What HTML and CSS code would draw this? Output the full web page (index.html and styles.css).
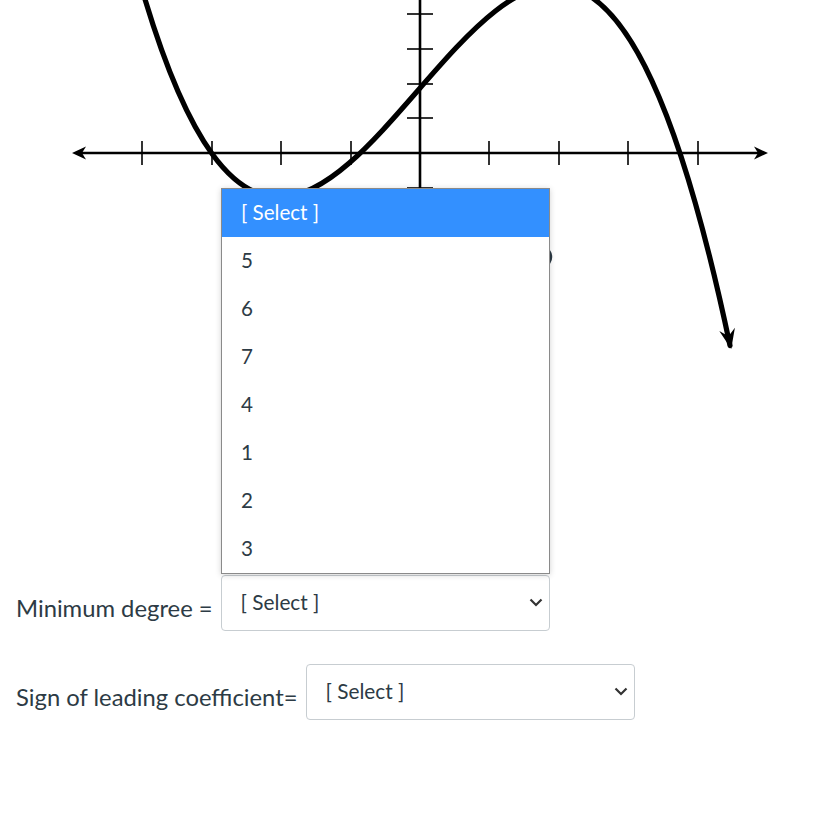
FILE: index.html
```html
<!DOCTYPE html>
<html>
<head>
<meta charset="utf-8">
<title>Graph question</title>
<link rel="stylesheet" href="styles.css">
</head>
<body>
<div class="page">
  <div class="graph">
    <svg class="graph-svg" width="820" height="560" viewBox="0 0 820 560" xmlns="http://www.w3.org/2000/svg">
      <g stroke="#000" fill="none">
        <line x1="78" y1="153" x2="762" y2="153" stroke-width="2.6"/>
        <line x1="420" y1="-2" x2="420" y2="420" stroke-width="2.6"/>
        <g stroke-width="1.6">
          <line x1="142" y1="141" x2="142" y2="165"/>
          <line x1="212" y1="141" x2="212" y2="165"/>
          <line x1="281" y1="141" x2="281" y2="165"/>
          <line x1="351" y1="141" x2="351" y2="165"/>
          <line x1="489" y1="141" x2="489" y2="165"/>
          <line x1="559" y1="141" x2="559" y2="165"/>
          <line x1="628" y1="141" x2="628" y2="165"/>
          <line x1="698" y1="141" x2="698" y2="165"/>
          <line x1="407" y1="14" x2="433" y2="14"/>
          <line x1="407" y1="49" x2="433" y2="49"/>
          <line x1="407" y1="84" x2="433" y2="84"/>
          <line x1="407" y1="118" x2="433" y2="118"/>
          <line x1="407" y1="188" x2="433" y2="188"/>
          <line x1="407" y1="222" x2="433" y2="222"/>
        </g>
        <path d="M144.1,-3.7 C339.4,648.8 534.7,-579.8 730,345.5" stroke-width="5.2" stroke-linecap="round"/>
        <ellipse cx="545" cy="257" rx="6" ry="8" stroke="#2d3b45" stroke-width="2.5"/>
      </g>
      <g fill="#000">
        <path d="M72,153 L86,146.5 L82,153 L86,159.5 Z"/>
        <path d="M768,153 L754,146.5 L758,153 L754,159.5 Z"/>
        <path d="M731.2,349 L734.9,327.8 L728.5,336.3 L719.3,331 Z"/>
      </g>
    </svg>
  </div>

  <div class="row row-first">
    <span class="label">Minimum degree =</span>
    <div class="select-wrap">
      <select class="select" aria-label="Minimum degree">
        <option>[ Select ]</option>
        <option>5</option>
        <option>6</option>
        <option>7</option>
        <option>4</option>
        <option>1</option>
        <option>2</option>
        <option>3</option>
      </select>
      <svg class="chev" width="14" height="9" viewBox="0 0 14 9" xmlns="http://www.w3.org/2000/svg"><path d="M1.5 1.5 L7 7 L12.5 1.5" fill="none" stroke="#333" stroke-width="2.2"/></svg>
    </div>
  </div>

  <div class="row row-second">
    <span class="label label-tight">Sign of leading coefficient=</span>
    <div class="select-wrap">
      <select class="select" aria-label="Sign of leading coefficient">
        <option>[ Select ]</option>
        <option>Positive</option>
        <option>Negative</option>
      </select>
      <svg class="chev" width="14" height="9" viewBox="0 0 14 9" xmlns="http://www.w3.org/2000/svg"><path d="M1.5 1.5 L7 7 L12.5 1.5" fill="none" stroke="#333" stroke-width="2.2"/></svg>
    </div>
  </div>

  <ul class="listbox">
    <li class="option option-active">[ Select ]</li>
    <li class="option">5</li>
    <li class="option">6</li>
    <li class="option">7</li>
    <li class="option">4</li>
    <li class="option">1</li>
    <li class="option">2</li>
    <li class="option">3</li>
  </ul>
</div>
</body>
</html>
```

FILE: styles.css
```css
html, body {
  margin: 0;
  padding: 0;
  background: #ffffff;
}

body {
  font-family: Lato, "Noto Sans", "Liberation Sans", sans-serif;
  color: #2d3b45;
}

.page {
  position: relative;
  width: 820px;
  height: 814px;
  overflow: hidden;
}

.graph-svg {
  display: block;
}

.row {
  display: flex;
  align-items: center;
  padding-left: 16px;
}

.row-first {
  margin-top: 15px;
}

.row-second {
  margin-top: 33px;
}

.label {
  font-size: 23.8px;
  padding-top: 10px;
  margin-right: 8px;
  white-space: nowrap;
}

.label-tight {
  margin-right: 8px;
}

.select-wrap {
  position: relative;
  display: flex;
}

.select {
  -webkit-appearance: none;
  appearance: none;
  box-sizing: border-box;
  width: 329px;
  height: 56px;
  margin: 0;
  padding: 0 40px 3px 19px;
  border: 1px solid #c7cdd1;
  border-radius: 4px;
  background: #ffffff;
  font-family: Lato, "Noto Sans", sans-serif;
  font-size: 20.8px;
  color: #2d3b45;
}

.chev {
  position: absolute;
  right: 7px;
  top: 23px;
  pointer-events: none;
}

.listbox {
  position: absolute;
  left: 221px;
  top: 188px;
  box-sizing: border-box;
  width: 329px;
  margin: 0;
  padding: 0;
  list-style: none;
  background: #ffffff;
  border: 1px solid #8a8a8a;
  box-shadow: 0 1px 6px rgba(0, 0, 0, 0.18);
}

.option {
  height: 48px;
  line-height: 47px;
  padding-left: 19px;
  font-size: 20.6px;
  color: #2d3b45;
}

.option-active {
  background: #3390ff;
  color: #ffffff;
}
```
